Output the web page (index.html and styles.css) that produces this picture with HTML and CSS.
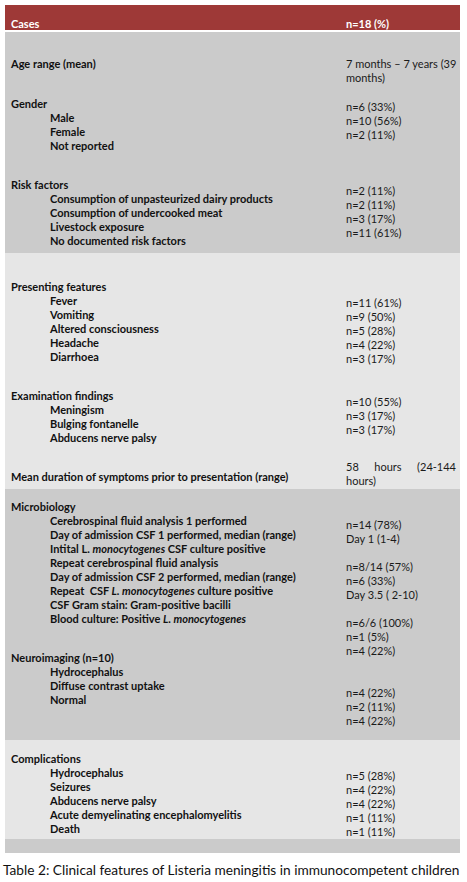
FILE: index.html
```html
<!DOCTYPE html>
<html>
<head>
<meta charset="utf-8">
<link rel="stylesheet" href="styles.css">
</head>
<body>
<div class="table">
  <div class="head">
    <div class="hl">Cases</div>
    <div class="hr">n=18 (%)</div>
  </div>

  <section class="band grey s1">
    <div class="grp g-age">
      <div class="l"><div class="ln">Age range (mean)</div></div>
      <div class="r"><div class="ln">7 months – 7 years (39</div><div class="ln">months)</div></div>
    </div>
    <div class="grp g-gender">
      <div class="l">
        <div class="ln">Gender</div>
        <div class="ln ind">Male</div>
        <div class="ln ind">Female</div>
        <div class="ln ind">Not reported</div>
      </div>
      <div class="r pad3">
        <div class="ln">n=6 (33%)</div>
        <div class="ln">n=10 (56%)</div>
        <div class="ln">n=2 (11%)</div>
      </div>
    </div>
    <div class="grp g-risk">
      <div class="l">
        <div class="ln">Risk factors</div>
        <div class="ln ind">Consumption of unpasteurized dairy products</div>
        <div class="ln ind">Consumption of undercooked meat</div>
        <div class="ln ind">Livestock exposure</div>
        <div class="ln ind">No documented risk factors</div>
      </div>
      <div class="r pad6">
        <div class="ln">n=2 (11%)</div>
        <div class="ln">n=2 (11%)</div>
        <div class="ln">n=3 (17%)</div>
        <div class="ln">n=11 (61%)</div>
      </div>
    </div>
  </section>

  <section class="band light s2">
    <div class="grp g-pres">
      <div class="l">
        <div class="ln">Presenting features</div>
        <div class="ln ind">Fever</div>
        <div class="ln ind">Vomiting</div>
        <div class="ln ind">Altered consciousness</div>
        <div class="ln ind">Headache</div>
        <div class="ln ind">Diarrhoea</div>
      </div>
      <div class="r pad16">
        <div class="ln">n=11 (61%)</div>
        <div class="ln">n=9 (50%)</div>
        <div class="ln">n=5 (28%)</div>
        <div class="ln">n=4 (22%)</div>
        <div class="ln">n=3 (17%)</div>
      </div>
    </div>
    <div class="grp g-exam">
      <div class="l">
        <div class="ln">Examination findings</div>
        <div class="ln ind">Meningism</div>
        <div class="ln ind">Bulging fontanelle</div>
        <div class="ln ind">Abducens nerve palsy</div>
      </div>
      <div class="r pad6">
        <div class="ln">n=10 (55%)</div>
        <div class="ln">n=3 (17%)</div>
        <div class="ln">n=3 (17%)</div>
      </div>
    </div>
    <div class="grp g-mean">
      <div class="l pad10"><div class="ln">Mean duration of symptoms prior to presentation (range)</div></div>
      <div class="r">
        <div class="ln just">58 hours (24-144</div>
        <div class="ln">hours)</div>
      </div>
    </div>
  </section>

  <section class="band grey s3">
    <div class="grp g-micro">
      <div class="l">
        <div class="blk">
          <div class="ln">Microbiology</div>
          <div class="ln ind">Cerebrospinal fluid analysis 1 performed</div>
          <div class="ln ind">Day of admission CSF 1 performed, median (range)</div>
          <div class="ln ind">Intital L. <i>monocytogenes</i> CSF culture positive</div>
          <div class="ln ind">Repeat cerebrospinal fluid analysis</div>
          <div class="ln ind">Day of admission CSF 2 performed, median (range)</div>
          <div class="ln ind">Repeat&nbsp; CSF <i>L. monocytogenes</i> culture positive</div>
          <div class="ln ind">CSF Gram stain: Gram-positive bacilli</div>
          <div class="ln ind">Blood culture: Positive <i>L. monocytogenes</i></div>
        </div>
        <div class="blk neuro">
          <div class="ln">Neuroimaging (n=10)</div>
          <div class="ln ind">Hydrocephalus</div>
          <div class="ln ind">Diffuse contrast uptake</div>
          <div class="ln ind">Normal</div>
        </div>
      </div>
      <div class="r pad18">
        <div class="blk">
          <div class="ln">n=14 (78%)</div>
          <div class="ln">Day 1 (1-4)</div>
          <div class="ln"></div>
          <div class="ln">n=8/14 (57%)</div>
          <div class="ln">n=6 (33%)</div>
          <div class="ln">Day 3.5 ( 2-10)</div>
          <div class="ln"></div>
          <div class="ln">n=6/6 (100%)</div>
          <div class="ln">n=1 (5%)</div>
          <div class="ln">n=4 (22%)</div>
        </div>
        <div class="blk neuro-r">
          <div class="ln">n=4 (22%)</div>
          <div class="ln">n=2 (11%)</div>
          <div class="ln">n=4 (22%)</div>
        </div>
      </div>
    </div>
  </section>

  <section class="band light s4">
    <div class="grp g-comp">
      <div class="l">
        <div class="ln">Complications</div>
        <div class="ln ind">Hydrocephalus</div>
        <div class="ln ind">Seizures</div>
        <div class="ln ind">Abducens nerve palsy</div>
        <div class="ln ind">Acute demyelinating encephalomyelitis</div>
        <div class="ln ind">Death</div>
      </div>
      <div class="r pad17">
        <div class="ln">n=5 (28%)</div>
        <div class="ln">n=4 (22%)</div>
        <div class="ln">n=4 (22%)</div>
        <div class="ln">n=1 (11%)</div>
        <div class="ln">n=1 (11%)</div>
      </div>
    </div>
  </section>

  <div class="band grey foot"></div>
</div>
<p class="caption">Table 2: Clinical features of Listeria meningitis in immunocompetent children</p>
</body>
</html>
```

FILE: styles.css
```css
html, body {
  margin: 0;
  padding: 0;
  background: #ffffff;
}

body {
  font-family: Lato, "Liberation Sans", sans-serif;
  color: #111111;
}

.table {
  width: 455px;
  margin: 5px 0 0 5px;
}

.head {
  display: grid;
  grid-template-columns: 341px 1fr;
  height: 27px;
  box-sizing: border-box;
  padding-top: 12px;
  background: #9e3937;
  border-bottom: 2px solid #ffffff;
  background-clip: padding-box;
  color: #ffffff;
  font-weight: bold;
  font-size: 11px;
  line-height: 13px;
}

.hl {
  padding-left: 6px;
}

.band {
  display: flex;
  flex-direction: column;
}

.grey {
  background: #cbcbcb;
}

.light {
  background: #e6e6e6;
}

.grp {
  display: grid;
  grid-template-columns: 341px 1fr;
  align-items: start;
}

.l {
  padding-left: 6px;
  font-weight: bold;
  font-size: 11px;
}

.r {
  font-size: 11px;
  padding-right: 4px;
  color: #1a1a1a;
}

.ln {
  line-height: 14px;
  height: 14px;
  white-space: nowrap;
}

.ind {
  padding-left: 39px;
}

.just {
  text-align: justify;
  text-align-last: justify;
}

.pad3 { padding-top: 3px; }
.pad6 { padding-top: 6px; }
.pad10 { padding-top: 10px; }
.pad16 { padding-top: 16px; }
.pad17 { padding-top: 17px; }
.pad18 { padding-top: 18px; }

.s1 { padding: 25px 0 5px; }
.g-gender { margin-top: 12px; }
.g-risk { margin-top: 25px; }

.s2 { padding: 27px 0 1px; }
.g-exam { margin-top: 23px; }
.g-mean { margin-top: 15px; }

.s3 { padding: 11px 0 12px; }
.neuro { margin-top: 25px; }
.neuro-r { margin-top: 28px; }

.s4 { padding: 12px 0 0; }

.foot {
  height: 14px;
}

.caption {
  margin: 8px 0 0 3px;
  font-size: 13.7px;
  line-height: 18px;
  color: #111111;
  white-space: nowrap;
}
```
